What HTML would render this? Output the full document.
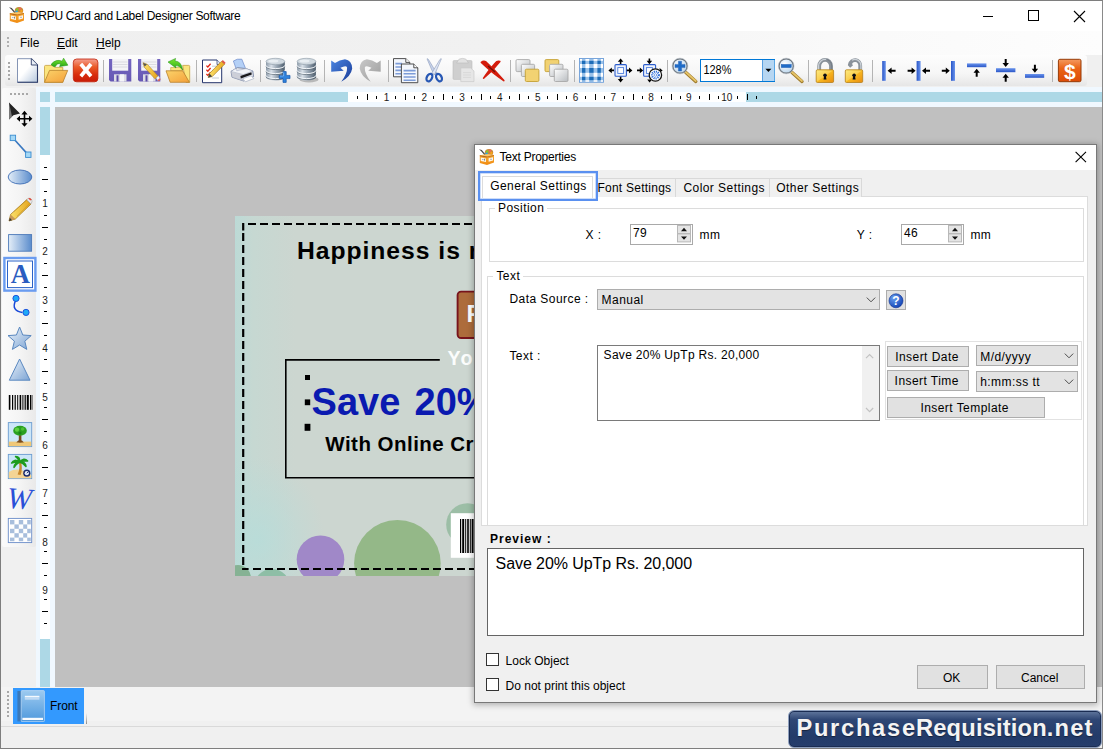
<!DOCTYPE html>
<html><head><meta charset="utf-8">
<style>
*{box-sizing:border-box;margin:0;padding:0}
html,body{width:1103px;height:749px;overflow:hidden;background:#f0f0f0}
body{font-family:"Liberation Sans",sans-serif;font-size:12px;color:#000;position:relative}
.a{position:absolute}
.t{position:absolute;white-space:nowrap;line-height:1}
#win{position:absolute;left:0;top:0;width:1103px;height:749px;background:#f0f0f0;overflow:hidden}
#title{left:1px;top:1px;width:1101px;height:30px;background:#fff}
#menubar{left:1px;top:31px;width:1101px;height:24px;background:linear-gradient(90deg,#efefef,#f1f1f1 45%,#f6f6f6 62%,#fafafa 80%,#fdfdfd)}
#toolbar{left:5px;top:55px;width:1082px;height:31px;background:linear-gradient(#fdfdfd,#f6f6f6 60%,#e6e6e6);border-radius:3px}
#toolbox{left:1px;top:86px;width:35px;height:601px;background:#f0f0f0}
#rulerbg{left:36px;top:87px;width:1066px;height:600px;background:#f0f8ff}
#canvas{left:55px;top:107px;width:1047px;height:580px;background:#c0c0c0}
.rb{background:#add8e6}
#tabbar{left:1px;top:687px;width:1101px;height:34px;background:#f3f3f3}
#status{left:1px;top:726px;width:1101px;height:22px;background:#f0f0f0;border-top:1px solid #d9d9d9}
.sep{position:absolute;width:1px;background:#b5b5b5}
/* dialog */
#dlg{left:474px;top:144px;width:625px;height:560px;background:#f0f0f0;border:1px solid #8a8a8a;box-shadow:0 0 7px 1px rgba(0,0,0,.35)}
.d{font-size:12px;letter-spacing:.45px}
.btn{position:absolute;background:#e1e1e1;border:1px solid #adadad;text-align:center}
.grp{position:absolute;border:1px solid #dcdcdc;background:#fff}
.inp{position:absolute;background:#fff;border:1px solid #7a7a7a}
.wm{font-size:23.7px;font-weight:bold;color:#f4f4f4;text-shadow:0 1px 1px rgba(0,0,0,.45)}
.cmb{position:absolute;background:#e3e3e3;border:1px solid #adadad}
</style></head><body>
<div id="win">
<div class="a" id="title"></div>
<div class="a" id="menubar"></div>
<div class="a" id="toolbar"></div>
<div class="a" id="toolbox"></div>
<div class="a" id="rulerbg"></div>
<div class="a" id="canvas"></div>
<div class="a" id="tabbar"></div>
<div class="a" id="status"></div>
<!--TITLE-->
<svg class="a" style="left:8px;top:6px" width="17" height="18" viewBox="0 0 17 18">
<defs><linearGradient id="bx" x1="0" y1="0" x2="0" y2="1"><stop offset="0" stop-color="#f7b13c"/><stop offset="1" stop-color="#f08a10"/></linearGradient></defs>
<ellipse cx="11" cy="4.6" rx="4.2" ry="3.6" fill="#c98a3a"/>
<circle cx="9.2" cy="3.6" r="1.2" fill="#7fd12a"/><circle cx="12" cy="2.8" r="1.2" fill="#ee6a5a"/><circle cx="13.4" cy="5" r="1.2" fill="#f7a21a"/><circle cx="8.6" cy="5.8" r="1.3" fill="#2aa5e8"/>
<path d="M1 1.2 L3.8 2 L7.6 6.6 L6.6 7.2 L3.4 3.4 Z" fill="#4a4a4a"/>
<path d="M1.8 7.2 L10 6.2 L16 7 L16 14.4 L9 17 L1.8 15 Z" fill="url(#bx)"/>
<path d="M1.8 7.2 L9 8.6 L16 7 L10 6.2Z" fill="#f9c56a"/>
<path d="M1.8 7.2 L9 8.6 L9 9.6 L1.8 8.3Z" fill="#b5651d"/><path d="M9 8.6 L16 7 L16 8 L9 9.6Z" fill="#c9781f"/>
<path d="M2.8 9.6 L8 10.4 L8 14 L2.8 13 Z" fill="#fdf6ea"/><path d="M10.6 10.2 L15 9.2 L15 12.6 L10.6 13.8Z" fill="#fdf6ea"/>
<rect x="4" y="11" width="1.6" height="1" fill="#bbb"/><rect x="6.2" y="10.8" width=".9" height="1.8" fill="#666"/><rect x="12" y="10.8" width="2" height=".9" fill="#aaa"/>
</svg>
<div class="t" id="ttl" style="left:30px;top:10px;font-size:12px;letter-spacing:-.3px">DRPU Card and Label Designer Software</div>
<svg class="a" style="left:975px;top:1px" width="126" height="30" viewBox="0 0 126 30" fill="none" stroke="#000" stroke-width="1" shape-rendering="crispEdges">
<path d="M8 15.5 H18"/><rect x="53.5" y="9.5" width="10" height="10"/>
<path d="M99 10 L110 21 M110 10 L99 21" shape-rendering="auto" stroke-width="1.1"/>
</svg>

<!--/TITLE-->
<!--MENU-->
<svg class="a" style="left:7px;top:36px" width="3" height="14" viewBox="0 0 3 14"><g fill="#b0b0b0"><rect x="0" y="1" width="2" height="2"/><rect x="0" y="5" width="2" height="2"/><rect x="0" y="9" width="2" height="2"/></g></svg>
<div class="t" style="left:20px;top:37px;font-size:12px">File</div>
<div class="t" style="left:57px;top:37px;font-size:12px"><u>E</u>dit</div>
<div class="t" style="left:96px;top:37px;font-size:12px"><u>H</u>elp</div>

<!--/MENU-->
<!--TOOLBAR-->
<svg class="a" style="left:0;top:55px" width="1103" height="32" viewBox="0 55 1103 32">
<defs>
<linearGradient id="gPage" x1="0" y1="0" x2="1" y2="1"><stop offset=".45" stop-color="#fff"/><stop offset="1" stop-color="#b4c6dc"/></linearGradient>
<linearGradient id="gFold" x1="0" y1="0" x2="1" y2="1"><stop offset="0" stop-color="#fbd36a"/><stop offset="1" stop-color="#f4a03a"/></linearGradient>
<linearGradient id="gRed" x1="0" y1="0" x2="0" y2="1"><stop offset="0" stop-color="#f4a090"/><stop offset=".35" stop-color="#ea5a28"/><stop offset=".7" stop-color="#d82c0c"/><stop offset="1" stop-color="#c81c08"/></linearGradient>
<linearGradient id="gGreen" x1="0" y1="0" x2="0" y2="1"><stop offset="0" stop-color="#7ee830"/><stop offset="1" stop-color="#28a818"/></linearGradient>
<linearGradient id="gPurp" x1="0" y1="0" x2="0" y2="1"><stop offset="0" stop-color="#7466c0"/><stop offset="1" stop-color="#6658b4"/></linearGradient>
<linearGradient id="gCyl" x1="0" y1="0" x2="1" y2="0"><stop offset="0" stop-color="#8c9aa8"/><stop offset=".28" stop-color="#d8e0e8"/><stop offset=".6" stop-color="#94a2b0"/><stop offset="1" stop-color="#4e5e6e"/></linearGradient>
<linearGradient id="gBlue" x1="0" y1="0" x2="1" y2="1"><stop offset="0" stop-color="#4a84e0"/><stop offset="1" stop-color="#1a3c98"/></linearGradient>
<linearGradient id="gGrey" x1="0" y1="0" x2="1" y2="1"><stop offset="0" stop-color="#c8c8c8"/><stop offset="1" stop-color="#9c9c9c"/></linearGradient>
<linearGradient id="gSq" x1="0" y1="0" x2="1" y2="1"><stop offset="0" stop-color="#fff"/><stop offset="1" stop-color="#b8bcc0"/></linearGradient>
<linearGradient id="gGold" x1="0" y1="0" x2="1" y2="1"><stop offset="0" stop-color="#fde870"/><stop offset=".5" stop-color="#f8b820"/><stop offset="1" stop-color="#e88c10"/></linearGradient>
<linearGradient id="gBar" x1="0" y1="0" x2="1" y2="0"><stop offset="0" stop-color="#2a56c8"/><stop offset="1" stop-color="#6a94ec"/></linearGradient>
<linearGradient id="gBarV" x1="0" y1="0" x2="0" y2="1"><stop offset="0" stop-color="#6a94ec"/><stop offset="1" stop-color="#2a56c8"/></linearGradient>
<linearGradient id="gOr" x1="0" y1="0" x2="0" y2="1"><stop offset="0" stop-color="#f49a60"/><stop offset=".4" stop-color="#ea6418"/><stop offset="1" stop-color="#dc4c08"/></linearGradient>
<radialGradient id="gLens" cx=".4" cy=".35" r=".7"><stop offset="0" stop-color="#fff"/><stop offset="1" stop-color="#b8d4ec"/></radialGradient>
<linearGradient id="gPen" x1="0" y1="0" x2="1" y2="0"><stop offset="0" stop-color="#fce470"/><stop offset="1" stop-color="#e8a820"/></linearGradient>
<g id="arL"><path d="M0 0 L4 -3.2 V-1 H8 V1 H4 V3.2Z" fill="#000"/></g>
<g id="floppy"><path d="M0 0 H22.3 V22.5 H1.6 L0 21Z" fill="url(#gPurp)"/><rect x="3.2" y="0" width="16" height="11.7" fill="#f4f4f6"/><path d="M4 3 H18.5 M4 5.5 H18.5 M4 8 H18.5" stroke="#d4d4dc" stroke-width=".8"/><rect x="5" y="15.3" width="12.5" height="7.2" fill="#dcdce4"/><rect x="7.5" y="16.3" width="2" height="6.2" fill="#5a4aa8"/><rect x="11" y="15.3" width="4" height="7.2" fill="#f4f4f8"/></g>
<g id="cyl"><path d="M0 3.2 V19 A9.4 3.2 0 0 0 18.8 19 V3.2Z" fill="url(#gCyl)"/><path d="M0 8 A9.4 3.2 0 0 0 18.8 8 M0 13 A9.4 3.2 0 0 0 18.8 13 M0 18 A9.4 3.2 0 0 0 18.8 18" fill="none" stroke="#56646f" stroke-width=".9" opacity=".75"/><path d="M0 7.1 A9.4 3.2 0 0 0 18.8 7.1 M0 12.1 A9.4 3.2 0 0 0 18.8 12.1 M0 17.1 A9.4 3.2 0 0 0 18.8 17.1" fill="none" stroke="#f2f6fa" stroke-width="1"/><ellipse cx="9.4" cy="3.2" rx="9.4" ry="3.2" fill="#d0d9e0" stroke="#8d9aa6" stroke-width=".6"/><ellipse cx="7.4" cy="2.8" rx="5" ry="1.5" fill="#eef2f6" opacity=".8"/></g>
<g id="lens"><path d="M5.6 6.4 L15.8 15.6" stroke="#a07c2c" stroke-width="3.4" stroke-linecap="round"/><path d="M5.6 6.2 L15.8 15.2" stroke="#e6c468" stroke-width="1.7" stroke-linecap="round"/><circle cx="0" cy="0.2" r="7.2" fill="url(#gLens)" stroke="#6c747c" stroke-width="1.3"/><circle cx="0" cy="0.2" r="7.9" fill="none" stroke="#b4bcc4" stroke-width=".5"/></g>
<g id="lockb"><rect x="0" y="0" width="17.4" height="12.7" rx="1.2" fill="url(#gGold)" stroke="#b4801c" stroke-width=".8"/><path d="M.6 .6 H16.8 L.6 12Z" fill="#fff3a0" opacity=".35"/><circle cx="8.8" cy="5.4" r="1.8" fill="#0c0c14"/><path d="M8 6.2 L7.3 9.6 H10.3 L9.6 6.2Z" fill="#0c0c14"/></g>
</defs>
<!-- grip -->
<g fill="#a8a8a8"><rect x="8" y="62" width="2" height="2"/><rect x="8" y="66" width="2" height="2"/><rect x="8" y="70" width="2" height="2"/><rect x="8" y="74" width="2" height="2"/><rect x="8" y="78" width="2" height="2"/></g>
<!-- separators -->
<g stroke="#b4b4b4" stroke-width="1"><path d="M103.5 60V82M196.5 60V82M260.5 60V82M324.5 60V82M388.5 60V82M510.5 60V82M574.5 60V82M667.5 60V82M808.5 60V82M872.5 60V82M1052.5 60V82"/></g>
<!-- new -->
<path d="M17.5 58.7 H31.3 L37.5 65 V82.3 H17.5Z" fill="url(#gPage)" stroke="#8494b4" stroke-width="1"/>
<path d="M31.3 58.7 L37.5 65 V82.3 H17.5" fill="none" stroke="#2c3c68" stroke-width="1.1"/><path d="M31.3 58.7 V65 H37.5" fill="#e8eef6" stroke="#2c3c68" stroke-width=".9"/>
<!-- open -->
<path d="M44.5 66.5 Q44.5 65.4 45.6 65.4 H53 L54.5 67.4 H62.8 V82.3 H44.5Z" fill="#fbe57e" stroke="#c8a040" stroke-width=".8"/>
<path d="M49.5 70.4 H67.7 L62.8 82.3 H44.5Z" fill="url(#gFold)" stroke="#b8802c" stroke-width=".8"/>
<path d="M51 64.5 Q56 58.5 62 61.2 L63.6 58.2 L67.9 65.2 L59.6 66.6 L60.6 63.8 Q56.6 63 55.4 66.6 Q52.8 67 51 64.5Z" fill="url(#gGreen)" stroke="#1c8c14" stroke-width=".5"/>
<!-- close -->
<rect x="73.3" y="59" width="24.6" height="22.8" rx="3.4" fill="url(#gRed)" stroke="#c02008" stroke-width=".8"/>
<path d="M80.8 64 L91 76.2 M91 64 L80.8 76.2" stroke="#fff" stroke-width="3.7"/>
<!-- save -->
<use href="#floppy" x="109" y="59"/>
<!-- save as -->
<use href="#floppy" x="138" y="59"/>
<g transform="translate(143 62.7) rotate(-42.5)"><path d="M0 0 L4 -2.1 H20 V2.1 H4Z" fill="url(#gPen)" stroke="#a87818" stroke-width=".5" transform="rotate(90)"/></g>
<path d="M143 62.7 L144.6 66.6 L147 64.4Z" fill="#555"/><path d="M156 78 L158.4 75.8 L160.2 78.6 L158 80.8Z" fill="#f4f4f4" stroke="#aaa" stroke-width=".4"/><path d="M157.6 80.2 L159.8 78 L160.6 79.4 L159 81.2Z" fill="#e86050"/>
<!-- folder back -->
<path d="M182.7 65.4 H188.7 Q189.7 65.4 189.7 66.4 V82.3 H186Z" fill="#fbe57e" stroke="#c8a040" stroke-width=".8"/>
<path d="M170.7 67.5 H182 L182.7 70.8 H170.7Z" fill="#fbe57e" stroke="#c8a040" stroke-width=".6"/>
<path d="M166 70.8 H182.7 L189.4 82.3 H170.2Z" fill="url(#gFold)" stroke="#b8802c" stroke-width=".8"/>
<path d="M168 62 L175.6 58.4 L175 61 Q181.6 61.4 182.6 70 Q180 65.6 175.6 65.4 L176 68Z" fill="url(#gGreen)" stroke="#1c8c14" stroke-width=".5"/>
<!-- edit -->
<path d="M202.5 60 H217 L221.7 64.6 V82.7 H202.5Z" fill="#fff" stroke="#24346c" stroke-width="1"/><path d="M217 60 V64.6 H221.7" fill="#dfe6f2" stroke="#24346c" stroke-width=".7"/>
<path d="M206.4 65.6 L207.8 67 L210.6 63.8 M206.4 69.8 L207.8 71.2 L210.6 68 M206.4 74 L207.8 75.4 L210.6 72.2" fill="none" stroke="#e02818" stroke-width="1.3"/>
<path d="M212 66.2 H218 M212 70.4 H218 M212 78 H219" stroke="#b8c0cc" stroke-width=".8"/>
<path d="M208.2 77.6 L209.4 73.6 L221.4 61.4 L224.6 64.2 L212.2 76.6Z" fill="url(#gPen)" stroke="#9c7010" stroke-width=".6"/><path d="M208.2 77.6 L209.4 73.6 L212.2 76.6Z" fill="#444"/><path d="M221.4 61.4 L222.8 60 L225.6 62.8 L224.6 64.2Z" fill="#e05848"/>
<!-- printer -->
<path d="M233.4 61 Q237 58.4 241.8 59.2 L245.6 68.6 L236.8 70.8Z" fill="#b4d0f6" stroke="#6c88c8" stroke-width=".7"/>
<path d="M231 71.4 L237.4 67.6 L246 68.6 L252.8 71 L253.6 76.6 L243.6 81 L232 77.2Z" fill="#dfe2e8" stroke="#6c7a9c" stroke-width=".8"/>
<path d="M231 71.4 L243.2 74.6 L252.8 71 L246 68.6 L236.8 70.8 L235.6 68.6Z" fill="#f2f4f8" stroke="#8a96b0" stroke-width=".4"/>
<path d="M232 77.2 L243.6 81 V75 L231.2 71.8Z" fill="#c4c8d2" opacity=".7"/>
<path d="M240.4 76 L251.4 72.2 L251.8 74.6 L240.8 78.6Z" fill="#1a1a1e"/>
<path d="M242.6 78.8 L251 75.8 L253.8 78.6 L245.4 81.8Z" fill="#fff" stroke="#8a96b0" stroke-width=".5"/>
<!-- db+ -->
<use href="#cyl" x="266" y="58.3"/>
<path d="M283 71.6 H286.2 V75.4 H290 V78.6 H286.2 V82.4 H283 V78.6 H279.2 V75.4 H283Z" fill="#2f82dc" stroke="#1656ac" stroke-width=".7"/><path d="M283.6 72.4 V76 H280" fill="none" stroke="#8cc0f4" stroke-width=".7"/>
<!-- db -->
<ellipse cx="309" cy="79.4" rx="9.6" ry="3" fill="#000" opacity=".22"/>
<use href="#cyl" x="297.1" y="58.3"/>
<!-- undo -->
<path d="M331.2 60.4 L335 63.1 Q339.6 60 345 59.3 Q351.8 60.2 352.2 68.5 Q351 76.5 341.2 81.7 Q347.4 73.4 347.1 67.4 Q346.2 64.8 340.4 67.7 L343.7 70.7 L331.2 71.8Z" fill="url(#gBlue)"/>
<!-- redo -->
<path d="M 380.7 60.4 L 376.9 63.1 Q 372.3 60.0 366.9 59.3 Q 360.1 60.2 359.7 68.5 Q 360.9 76.5 370.7 81.7 Q 364.5 73.4 364.8 67.4 Q 365.7 64.8 371.5 67.7 L 368.2 70.7 L 380.7 71.8 Z" fill="url(#gGrey)"/>
<!-- copy -->
<g stroke="#3c3c3c" stroke-width=".9"><path d="M393.5 58.6 H405.8 L409.8 62.4 V76.8 H393.5Z" fill="#f4f7fc"/><path d="M405.8 58.6 V62.4 H409.8" fill="#fff"/></g>
<path d="M395.4 63.6 H402 M395.4 67 H402 M395.4 70.4 H401 M395.4 73.8 H401" stroke="#7c9cd8" stroke-width="1.6"/>
<g stroke="#3c3c3c" stroke-width=".9"><path d="M401.4 64 H413.8 L417.8 67.8 V82.7 H401.4Z" fill="#f4f7fc"/><path d="M413.8 64 V67.8 H417.8" fill="#fff"/></g>
<path d="M403.6 70.6 H415.6 M403.6 73.8 H415.6 M403.6 77 H415.6 M403.6 80.2 H415.6" stroke="#7c9cd8" stroke-width="1.6"/>
<!-- cut -->
<path d="M427 58.8 Q427.6 58.4 428.4 59.4 L436.6 73 L433.8 74.6Z" fill="#c8d4ec" stroke="#8a98b8" stroke-width=".6"/>
<path d="M441.4 58.8 Q440.8 58.4 440 59.4 L431.8 73 L434.6 74.6Z" fill="#dfe6f4" stroke="#8a98b8" stroke-width=".6"/>
<ellipse cx="429.4" cy="77.6" rx="2.6" ry="4" transform="rotate(28 429.4 77.6)" fill="none" stroke="#2858b4" stroke-width="2.2"/>
<ellipse cx="439" cy="77.6" rx="2.6" ry="4" transform="rotate(-28 439 77.6)" fill="none" stroke="#2858b4" stroke-width="2.2"/>
<!-- paste -->
<rect x="453" y="60.6" width="19" height="18.8" rx="1" fill="#cfcfcf" stroke="#bdbdbd" stroke-width=".6"/><path d="M458 60.8 Q458 58.6 462.5 58.4 Q467 58.6 467 60.8 L468.4 63 H456.6Z" fill="#e2e2e2" stroke="#bcbcbc" stroke-width=".6"/>
<path d="M460.8 68 H470.6 L474 71 V81.6 H460.8Z" fill="#e6e6e6" stroke="#cacaca" stroke-width=".7"/><path d="M463 72.6 H471 M463 75 H471 M463 77.4 H471" stroke="#d4d4d4" stroke-width=".8"/>
<!-- delete -->
<path d="M481.4 62.4 Q483.6 60.4 486 62 Q495 70 503.8 80.6 Q493 73.4 481.4 62.4Z" fill="#d41c0c" stroke="#d41c0c" stroke-width="1.6" stroke-linejoin="round"/>
<path d="M499.8 61.4 Q497 60.6 495.4 63 Q488 71.4 483.6 78.2 Q492.6 70.8 499.8 61.4Z" fill="#d41c0c" stroke="#d41c0c" stroke-width="1.6" stroke-linejoin="round"/>
<path d="M488 66 L495 72" stroke="#701008" stroke-width="1.4"/>
<!-- layers front -->
<g stroke="#a8a8a8" stroke-width=".9"><rect x="516" y="59.6" width="14" height="12" rx="1.2" fill="url(#gSq)"/><rect x="521.4" y="64.3" width="13.2" height="12.2" rx="1.2" fill="url(#gSq)"/></g><rect x="525.3" y="69.2" width="13.6" height="12.3" rx="1.2" fill="#f2d272" stroke="#c4a034" stroke-width=".9"/>
<!-- layers back -->
<rect x="545" y="59.6" width="13.8" height="12" rx="1.2" fill="#f2d272" stroke="#c4a034" stroke-width=".9"/><g stroke="#a8a8a8" stroke-width=".9"><rect x="549.6" y="64.3" width="13.4" height="12.2" rx="1.2" fill="url(#gSq)"/><rect x="554.3" y="69.2" width="13.7" height="12.3" rx="1.2" fill="url(#gSq)"/></g>
<!-- grid -->
<rect x="579.5" y="58.5" width="24" height="23.8" fill="#fff" stroke="#6a9cd8" stroke-width=".9"/>
<g fill="#5a9adc" opacity=".6"><rect x="582" y="59" width="3.4" height="23"/><rect x="589.2" y="59" width="4.4" height="23"/><rect x="597.4" y="59" width="3.4" height="23"/><rect x="580" y="60.8" width="23.2" height="3.2"/><rect x="580" y="68" width="23.2" height="4.8"/><rect x="580" y="76.8" width="23.2" height="3.4"/></g>
<g fill="#1c6cb8"><rect x="582" y="60.8" width="3.4" height="3.2"/><rect x="589.2" y="60.8" width="4.4" height="3.2"/><rect x="597.4" y="60.8" width="3.4" height="3.2"/><rect x="582" y="68" width="3.4" height="4.8"/><rect x="589.2" y="68" width="4.4" height="4.8"/><rect x="597.4" y="68" width="3.4" height="4.8"/><rect x="582" y="76.8" width="3.4" height="3.4"/><rect x="589.2" y="76.8" width="4.4" height="3.4"/><rect x="597.4" y="76.8" width="3.4" height="3.4"/></g>
<!-- center -->
<rect x="615" y="64.6" width="11.4" height="11.6" rx="1" fill="#eef3fc" stroke="#2c5ccc" stroke-width="1.1"/><rect x="617.8" y="67.6" width="5.8" height="5.8" fill="#fff" stroke="#4c7cdc" stroke-width=".9"/>
<g fill="#000"><path d="M620.6 58.4 L623.4 61.8 H621.4 V64 H619.8 V61.8 H617.8Z"/><path d="M620.6 82.4 L623.4 79 H621.4 V76.8 H619.8 V79 H617.8Z"/><path d="M608.4 70.4 L611.8 67.6 V69.6 H614 V71.2 H611.8 V73.2Z"/><path d="M632.4 70.4 L629 67.6 V69.6 H626.8 V71.2 H629 V73.2Z"/></g>
<!-- center gear -->
<rect x="643.6" y="64.6" width="12" height="11.6" rx="1" fill="#eef3fc" stroke="#2c5ccc" stroke-width="1.1"/><rect x="646.4" y="67.6" width="6" height="5.8" fill="#fff" stroke="#4c7cdc" stroke-width=".9"/>
<g fill="#000"><path d="M649.4 64.2 L652.2 60.8 H650.2 V58.4 H648.6 V60.8 H646.6Z"/><path d="M643.2 70.4 L639.8 67.6 V69.6 H637 V71.2 H639.8 V73.2Z"/><path d="M662.6 70.4 L659.6 68 V72.8Z"/><path d="M649.6 82.4 L652 79.6 H647.2Z"/></g>
<circle cx="655.4" cy="75" r="6.2" fill="#fff" stroke="#111" stroke-width="1.3"/>
<circle cx="655.4" cy="75" r="3.4" fill="none" stroke="#2c6cd8" stroke-width="2.2" stroke-dasharray="1.1 .9"/><circle cx="655.4" cy="75" r="1.3" fill="#fff" stroke="#2c6cd8" stroke-width=".6"/>
<!-- zoom in -->
<use href="#lens" x="680" y="65.8"/>
<path d="M678.4 61.2 H681.6 V64.4 H685 V67.6 H681.6 V71 H678.4 V67.6 H675 V64.4 H678.4Z" fill="#1e6cc8" stroke="#1a58b0" stroke-width=".4"/>
<!-- combo -->
<rect x="700.5" y="59.5" width="74" height="22" fill="#fff" stroke="#0078d7" stroke-width="1"/>
<rect x="762.5" y="60" width="12" height="21" fill="#b6d6f2"/><path d="M762.5 60 V81" stroke="#5aa0e0" stroke-width="1"/>
<path d="M765.4 68.8 H771.4 L768.4 72Z" fill="#000"/>
<text x="703.4" y="73.9" font-family="Liberation Sans, sans-serif" font-size="12.4" fill="#000" textLength="28" lengthAdjust="spacingAndGlyphs">128%</text>
<!-- zoom out -->
<use href="#lens" x="786.2" y="65.8"/>
<rect x="781.2" y="64.4" width="10" height="3.2" fill="#1e6cc8" stroke="#1a58b0" stroke-width=".4"/>
<!-- lock -->
<path d="M819.2 70.4 V66 A5.9 6.2 0 0 1 831 66 V70.4" fill="none" stroke="#8a929a" stroke-width="3.8"/><path d="M818.6 70.4 V66 A6.5 6.8 0 0 1 826 59.4" fill="none" stroke="#ccd2d8" stroke-width="1.3"/><path d="M831.8 70.4 V66 A6.6 6.9 0 0 0 827 59.6" fill="none" stroke="#747c86" stroke-width="1"/>
<use href="#lockb" x="816.2" y="69.8"/>
<!-- unlock -->
<path d="M860.2 70.4 V65.8 A5.2 5.6 0 0 0 849.9 64.6 L851.6 66.6" fill="none" stroke="#8a929a" stroke-width="3.8"/><path d="M860.9 70.4 V65.8 A6 6.3 0 0 0 852 60.2" fill="none" stroke="#ccd2d8" stroke-width="1.2"/>
<use href="#lockb" x="845.3" y="69.8"/>
<!-- align -->
<rect x="882.2" y="61" width="3.6" height="19.8" fill="url(#gBar)"/><use href="#arL" x="887.6" y="70.8"/>
<use href="#arL" transform="translate(915.6 70.8) scale(-1 1)"/><rect x="916.6" y="61" width="4" height="19.8" fill="url(#gBar)"/><use href="#arL" x="922" y="70.8"/>
<use href="#arL" transform="translate(949.8 70.8) scale(-1 1)"/><rect x="951" y="61" width="4" height="19.8" fill="url(#gBar)"/>
<rect x="967" y="63.4" width="19.4" height="3.8" fill="url(#gBarV)"/><use href="#arL" transform="translate(976.7 68.8) rotate(90)"/>
<use href="#arL" transform="translate(1005.7 66.9) rotate(-90)"/><rect x="996" y="68.2" width="19.4" height="4" fill="url(#gBarV)"/><use href="#arL" transform="translate(1005.7 73.8) rotate(90)"/>
<use href="#arL" transform="translate(1034.9 72.8) rotate(-90)"/><rect x="1025" y="74" width="19.2" height="3.8" fill="url(#gBarV)"/>
<!-- dollar -->
<rect x="1058.4" y="59.3" width="22.6" height="22.4" rx="1.5" fill="url(#gOr)" stroke="#963c08" stroke-width="1"/>
<text x="1069.8" y="78.6" text-anchor="middle" font-family="Liberation Sans, sans-serif" font-weight="bold" font-size="21" fill="#fff">$</text>
</svg>

<!--/TOOLBAR-->
<!--RULERS-->
<div class="a rb" style="left:40px;top:92px;width:10px;height:10px"></div>
<div class="a rb" style="left:55px;top:92px;width:293px;height:10px"></div>
<div class="a" style="left:348px;top:92px;width:398px;height:10px;background:#fff"></div>
<div class="a rb" style="left:746px;top:92px;width:356px;height:10px"></div>
<div class="a rb" style="left:40px;top:107px;width:10px;height:48px"></div>
<div class="a" style="left:40px;top:155px;width:10px;height:484px;background:#fff"></div>
<div class="a rb" style="left:40px;top:639px;width:10px;height:48px"></div>
<svg class="a" style="left:0;top:86px" width="1103" height="602" viewBox="0 86 1103 602" font-family="Liberation Sans, sans-serif" font-size="10" fill="#1a1a1a">
<text x="386.5" y="100.8" text-anchor="middle">1</text>
<text x="424.3" y="100.8" text-anchor="middle">2</text>
<text x="462.1" y="100.8" text-anchor="middle">3</text>
<text x="499.9" y="100.8" text-anchor="middle">4</text>
<text x="537.7" y="100.8" text-anchor="middle">5</text>
<text x="575.5" y="100.8" text-anchor="middle">6</text>
<text x="613.3" y="100.8" text-anchor="middle">7</text>
<text x="651.1" y="100.8" text-anchor="middle">8</text>
<text x="688.9" y="100.8" text-anchor="middle">9</text>
<text x="726.7" y="100.8" text-anchor="middle">10</text>
<path d="M357.5 95.5V98.5M367.5 94V100M376.5 95.5V98.5M395.5 95.5V98.5M405.5 94V100M414.5 95.5V98.5M433.5 95.5V98.5M443.5 94V100M452.5 95.5V98.5M471.5 95.5V98.5M481.5 94V100M490.5 95.5V98.5M509.5 95.5V98.5M519.5 94V100M528.5 95.5V98.5M547.5 95.5V98.5M557.5 94V100M566.5 95.5V98.5M585.5 95.5V98.5M595.5 94V100M604.5 95.5V98.5M623.5 95.5V98.5M633.5 94V100M642.5 95.5V98.5M661.5 95.5V98.5M671.5 94V100M680.5 95.5V98.5M699.5 95.5V98.5M709.5 94V100M718.5 95.5V98.5M737.5 95.5V98.5M747.5 94V100M756.5 95.5V98.5" stroke="#000" stroke-width="1" shape-rendering="crispEdges"/>
<text x="45.1" y="206.9" text-anchor="middle">1</text>
<text x="45.1" y="255.3" text-anchor="middle">2</text>
<text x="45.1" y="303.7" text-anchor="middle">3</text>
<text x="45.1" y="352.1" text-anchor="middle">4</text>
<text x="45.1" y="400.5" text-anchor="middle">5</text>
<text x="45.1" y="448.9" text-anchor="middle">6</text>
<text x="45.1" y="497.3" text-anchor="middle">7</text>
<text x="45.1" y="545.7" text-anchor="middle">8</text>
<text x="45.1" y="594.1" text-anchor="middle">9</text>
<path d="M43.5 167.5H46.5M42 179.5H48M43.5 191.5H46.5M43.5 215.5H46.5M42 227.5H48M43.5 239.5H46.5M43.5 263.5H46.5M42 275.5H48M43.5 287.5H46.5M43.5 311.5H46.5M42 323.5H48M43.5 335.5H46.5M43.5 359.5H46.5M42 371.5H48M43.5 383.5H46.5M43.5 407.5H46.5M42 419.5H48M43.5 431.5H46.5M43.5 455.5H46.5M42 467.5H48M43.5 479.5H46.5M43.5 503.5H46.5M42 515.5H48M43.5 527.5H46.5M43.5 551.5H46.5M42 563.5H48M43.5 575.5H46.5M43.5 599.5H46.5M42 611.5H48M43.5 623.5H46.5" stroke="#000" stroke-width="1" shape-rendering="crispEdges"/>
</svg>
<!--/RULERS-->
<!--TOOLBOX-->
<div class="a" style="left:2px;top:88px;width:34px;height:459px;background:linear-gradient(90deg,#fbfbfb,#f4f4f4 55%,#e9e9e9);border-radius:2px"></div>
<svg class="a" style="left:0;top:86px" width="40" height="470" viewBox="0 86 40 470">
<defs>
<linearGradient id="tE" x1="0" y1="0" x2="1" y2="0"><stop offset="0" stop-color="#e4eef8"/><stop offset="1" stop-color="#5a8ccc"/></linearGradient>
<linearGradient id="tS" x1="0" y1="0" x2="1" y2="1"><stop offset="0" stop-color="#eef4fa"/><stop offset="1" stop-color="#7ca4d4"/></linearGradient>
<linearGradient id="tP" x1="0" y1="0" x2="1" y2="0"><stop offset="0" stop-color="#fce470"/><stop offset="1" stop-color="#e4a41c"/></linearGradient>
</defs>
<g fill="#a8a8a8"><rect x="10" y="93" width="2" height="2"/><rect x="14" y="93" width="2" height="2"/><rect x="18" y="93" width="2" height="2"/><rect x="22" y="93" width="2" height="2"/><rect x="26" y="93" width="2" height="2"/></g>
<!-- select -->
<path d="M9 102.6 L9 119.4 L13.4 115.2 L20 113.6Z" fill="#222"/><path d="M9 102.6 L9 119.4 L12 116.6Z" fill="#777"/>
<g fill="#000"><path d="M24.5 110.8 L27.6 114.4 H25.3 V118 H29 V115.8 L32.4 118.8 L29 121.8 V119.6 H25.3 V123.2 H27.6 L24.5 126.8 L21.4 123.2 H23.7 V119.6 H20 V121.8 L16.6 118.8 L20 115.8 V118 H23.7 V114.4 H21.4Z"/></g>
<!-- line -->
<path d="M13 138 L28 154.6" stroke="#3a78c0" stroke-width="1.6"/>
<rect x="10.2" y="135.2" width="5.4" height="5.4" fill="#a4d8f6" stroke="#3a8cd0" stroke-width=".9"/><rect x="25.6" y="152" width="5.4" height="5.4" fill="#a4d8f6" stroke="#3a8cd0" stroke-width=".9"/>
<!-- ellipse -->
<ellipse cx="20" cy="177" rx="11.8" ry="7" fill="url(#tE)" stroke="#3c6cb4" stroke-width=".9"/>
<!-- pencil -->
<path d="M9 221 L10.6 214.4 L26.6 199.8 L31 204 L15.4 219Z" fill="url(#tP)" stroke="#9c7010" stroke-width=".7"/><path d="M9 221 L10.6 214.4 L15.4 219Z" fill="#c89858"/><path d="M9 221 L9.8 217.8 L12 220.2Z" fill="#333"/>
<path d="M26.6 199.8 L28.2 198.4 Q30.2 197.6 31.6 199.6 Q32.8 201.4 31 204Z" fill="#e8e8e8" stroke="#999" stroke-width=".5"/><path d="M28.2 198.4 Q30.2 197.2 31.8 199.6 L30.4 200.6Z" fill="#e04838"/>
<path d="M14 211.6 L27.2 199.6 M17 216 L29.6 203.4" stroke="#c48c18" stroke-width=".6" opacity=".6"/>
<!-- rect -->
<rect x="8.6" y="234.6" width="23" height="16.6" fill="url(#tE)" stroke="#4a78b8" stroke-width=".9"/>
<!-- A selected -->
<rect x="4.4" y="258" width="31" height="32.6" fill="#fff" stroke="#6a9cf0" stroke-width="2.4"/>
<rect x="7.5" y="261" width="25" height="26.6" fill="#fff" stroke="#2a62c8" stroke-width="1"/>
<text x="20.2" y="283.4" text-anchor="middle" font-family="Liberation Serif, serif" font-weight="bold" font-size="26.5" fill="#2a5cc0">A</text>
<!-- curve -->
<path d="M15.4 301 Q11 310.6 22.4 312.6" fill="none" stroke="#1848d8" stroke-width="1.5"/>
<circle cx="16" cy="298.4" r="3.1" fill="#1eaaf8" stroke="#1848d8" stroke-width=".9"/><circle cx="26" cy="312.4" r="3.1" fill="#1eaaf8" stroke="#1848d8" stroke-width=".9"/>
<!-- star -->
<path d="M19.6 327 L22.8 335 L31.2 335.6 L24.8 341.2 L26.8 349.4 L19.6 345 L12.4 349.4 L14.4 341.2 L8 335.6 L16.4 335Z" fill="url(#tS)" stroke="#5a88c0" stroke-width="1" stroke-linejoin="round"/>
<!-- triangle -->
<path d="M19.6 359 L30 380.2 H9.3Z" fill="url(#tS)" stroke="#5a88c0" stroke-width="1" stroke-linejoin="round"/>
<!-- barcode -->
<g fill="#000"><rect x="8.8" y="395" width="1.6" height="14.8"/><rect x="12" y="395" width="1.2" height="14.8"/><rect x="14.6" y="395" width="1.2" height="14.8"/><rect x="17.2" y="395" width="1" height="14.8"/><rect x="19.6" y="395" width="1.6" height="14.8"/><rect x="22.4" y="395" width="1" height="14.8"/><rect x="24.6" y="395" width="1.2" height="14.8"/><rect x="26.8" y="395" width="2" height="14.8"/><rect x="30" y="395" width="1" height="14.8"/><rect x="31.6" y="395" width=".8" height="14.8"/></g>
<!-- image -->
<rect x="8.3" y="422.6" width="23.4" height="24" fill="#cce6f8" stroke="#6a9cd0" stroke-width=".9"/>
<rect x="8.8" y="441.6" width="22.4" height="4.6" fill="#f0c878"/>
<rect x="18.8" y="434" width="2.6" height="8.4" fill="#7a4a1c"/><path d="M16.4 442.4 H23.8 L22 440.6 H18.2Z" fill="#7a4a1c"/>
<ellipse cx="20" cy="430.8" rx="6.8" ry="5" fill="#2aa020"/><circle cx="17" cy="429.6" r="2.2" fill="#5cd040"/><circle cx="22.6" cy="429" r="1.8" fill="#4cc034"/><circle cx="20" cy="433" r="1.6" fill="#188414"/>
<!-- image2 -->
<rect x="8.3" y="454.4" width="23.4" height="24.2" fill="#cce6f8" stroke="#6a9cd0" stroke-width=".9"/>
<path d="M8.8 472 Q16 467.6 24 471 L31.2 475 V478.2 H8.8Z" fill="#f4d494"/>
<path d="M17.6 474.6 Q20.6 468 18.6 461.4 L20.8 461.4 Q23 468 20.6 475Z" fill="#c8882c"/>
<path d="M19.6 462 Q14 458.4 11.6 463 Q15.6 461.6 19.6 462 Q24 457 27.6 461 Q23.6 460.4 19.6 462 Q20 456.4 15.6 456.6 Q18.6 458.4 19.6 462 Q25.6 461.4 26 466.4 Q23 462.8 19.6 462 Q14.4 463 14 467.4 Q16.4 463.6 19.6 462Z" fill="#1c9c1c" stroke="#1c9c1c" stroke-width="1.6" stroke-linejoin="round"/>
<circle cx="26.8" cy="473.2" r="3.6" fill="#1c2c6c"/><circle cx="26.8" cy="473.2" r="2.1" fill="#e4ecf8"/><path d="M26.8 473.2 L28.6 471.4" stroke="#1c2c6c" stroke-width=".9"/>
<!-- W -->
<text x="19.4" y="508.6" text-anchor="middle" font-family="Liberation Serif, serif" font-style="italic" font-size="30" fill="#2a50d8" transform="rotate(4 20 500)">W</text>
<!-- checker -->
<rect x="8.3" y="518.4" width="23.4" height="24.2" fill="#fff" stroke="#6a8cc8" stroke-width=".9"/>
<g fill="#a8bedc"><rect x="10" y="520" width="4.4" height="4.4"/><rect x="18.8" y="520" width="4.4" height="4.4"/><rect x="27.2" y="520" width="3.6" height="4.4"/><rect x="14.4" y="524.4" width="4.4" height="4.4"/><rect x="23.2" y="524.4" width="4" height="4.4"/><rect x="10" y="528.8" width="4.4" height="4.4"/><rect x="18.8" y="528.8" width="4.4" height="4.4"/><rect x="27.2" y="528.8" width="3.6" height="4.4"/><rect x="14.4" y="533.2" width="4.4" height="4.4"/><rect x="23.2" y="533.2" width="4" height="4.4"/><rect x="10" y="537.6" width="4.4" height="3.6"/><rect x="18.8" y="537.6" width="4.4" height="3.6"/><rect x="27.2" y="537.6" width="3.6" height="3.6"/></g>
</svg>

<!--/TOOLBOX-->
<!--CARD-->
<div class="a" id="card" style="left:235px;top:216px;width:420px;height:360px;background:#ccd6d0;overflow:hidden">
<div class="a" style="left:0;top:0;width:60px;height:360px;background:linear-gradient(90deg,#bcdad6,#c6d8d2 30%,rgba(204,214,208,0))"></div>
<div class="a" style="left:0;top:240px;width:90px;height:120px;background:radial-gradient(ellipse at 25% 70%,rgba(182,221,218,.8),rgba(204,214,208,0) 70%)"></div>
<svg class="a" style="left:0;top:0" width="420" height="360" viewBox="235 216 420 360">
<circle cx="467.5" cy="524.5" r="21.3" fill="#9cbea6"/>
<circle cx="238" cy="578" r="13" fill="#86b294"/>
<circle cx="272" cy="587" r="18" fill="#8ebea6"/>
<circle cx="320.5" cy="559.3" r="23.8" fill="#a088c8"/>
<circle cx="397.4" cy="563.3" r="43.3" fill="#94b888"/>
<rect x="450.8" y="513.2" width="60" height="44.6" fill="#fff"/>
<g fill="#000"><rect x="460" y="519" width="1.2" height="34"/><rect x="462.2" y="519" width="2" height="34"/><rect x="465.2" y="519" width="1" height="34"/><rect x="467.2" y="519" width="1.6" height="34"/><rect x="469.8" y="519" width="1" height="34"/><rect x="471.6" y="519" width="2" height="34"/><rect x="474.6" y="519" width="1" height="34"/></g>
<path d="M248 224 H700 M243.2 233 V567 M253 569 H700" fill="none" stroke="#000" stroke-width="2.2" stroke-dasharray="8 4"/><path d="M243.2 223 V230.4 M242.1 569 H248.6" fill="none" stroke="#000" stroke-width="2.2"/>
<path d="M439.8 359.9 H285.8 V477.7 H700" fill="none" stroke="#000" stroke-width="1.6"/>
<rect x="457.6" y="291.6" width="60" height="46.4" rx="3.5" fill="#ad6c3c" stroke="#78141c" stroke-width="1.9"/>
<g fill="#000"><rect x="305" y="375" width="5" height="5"/><rect x="304.8" y="399.4" width="5.4" height="5.8"/><rect x="304.6" y="423.8" width="5.8" height="7"/></g>
</svg>
<div class="t" style="left:61.9px;top:22.7px;font-weight:bold;font-size:24.7px;letter-spacing:.97px">Happiness is not</div>
<div class="t" id="cF" style="left:231.6px;top:86.4px;font-weight:bold;font-size:24.4px;color:#fff">F</div>
<div class="t" id="cY" style="left:212.6px;top:132.8px;font-weight:bold;font-size:19.6px;color:#fbfdfc;letter-spacing:1.3px">You</div>
<div class="t" style="left:76.6px;top:166.8px;font-weight:bold;font-size:38px;color:#0a1ab0;word-spacing:3.7px">Save 20% UpTo</div>
<div class="t" style="left:90.3px;top:217.6px;font-weight:bold;font-size:20.5px;letter-spacing:.47px">With Online Credit</div>
</div>

<!--/CARD-->
<!--TABBAR-->
<svg class="a" style="left:7px;top:690px" width="3" height="28" viewBox="0 0 3 28"><g fill="#a8a8a8"><rect y="1" width="2" height="2"/><rect y="5" width="2" height="2"/><rect y="9" width="2" height="2"/><rect y="13" width="2" height="2"/><rect y="17" width="2" height="2"/><rect y="21" width="2" height="2"/><rect y="25" width="2" height="2"/></g></svg>
<div class="a" style="left:13px;top:688px;width:71px;height:36px;background:#3399fe"></div>
<svg class="a" style="left:16px;top:690px" width="30" height="32" viewBox="0 0 30 32"><defs><linearGradient id="bk" x1="0" y1="0" x2="0" y2="1"><stop offset="0" stop-color="#9ccaf0"/><stop offset="1" stop-color="#4e98dc"/></linearGradient></defs>
<rect x="1.4" y="1" width="4.2" height="30.4" fill="#3a78b8"/><rect x="5.2" y=".6" width="23.2" height="31" rx=".8" fill="url(#bk)" stroke="#c4dcf4" stroke-width=".7"/>
<rect x="8.8" y="5.8" width="14.6" height="1.7" fill="#f4f9fe"/><rect x="8.8" y="7.5" width="14.6" height="2.2" fill="#c0daf4"/><rect x="6.4" y="27.8" width="20.6" height="2.2" fill="#f8fbfe"/></svg>
<div class="t" style="left:50px;top:699.6px;font-size:12px;letter-spacing:-.1px">Front</div>
<div class="a" style="left:86px;top:713px;width:1px;height:11px;background:linear-gradient(rgba(150,150,150,0),#8e8e8e)"></div>

<!--/TABBAR-->
<!--DIALOG-->
<div class="a" id="dlg" style="left:474px;top:144px;width:623px;height:559px;background:#f0f0f0;border:1px solid #787878;box-shadow:0 1px 6px 1px rgba(0,0,0,.27)"></div>
<div class="a" id="dl" style="left:0;top:0;width:0;height:0">
<div class="a" style="left:475px;top:145px;width:621px;height:25px;background:#fff"></div>
<svg class="a" style="left:478px;top:148px" width="17" height="18" viewBox="0 0 17 18">
<ellipse cx="11" cy="4.6" rx="4.2" ry="3.6" fill="#c98a3a"/>
<circle cx="9.2" cy="3.6" r="1.2" fill="#7fd12a"/><circle cx="12" cy="2.8" r="1.2" fill="#ee6a5a"/><circle cx="13.4" cy="5" r="1.2" fill="#f7a21a"/><circle cx="8.6" cy="5.8" r="1.3" fill="#2aa5e8"/>
<path d="M1 1.2 L3.8 2 L7.6 6.6 L6.6 7.2 L3.4 3.4 Z" fill="#4a4a4a"/>
<path d="M1.8 7.2 L10 6.2 L16 7 L16 14.4 L9 17 L1.8 15 Z" fill="url(#bx)"/>
<path d="M1.8 7.2 L9 8.6 L16 7 L10 6.2Z" fill="#f9c56a"/>
<path d="M1.8 7.2 L9 8.6 L9 9.6 L1.8 8.3Z" fill="#b5651d"/><path d="M9 8.6 L16 7 L16 8 L9 9.6Z" fill="#c9781f"/>
<path d="M2.8 9.6 L8 10.4 L8 14 L2.8 13 Z" fill="#fdf6ea"/><path d="M10.6 10.2 L15 9.2 L15 12.6 L10.6 13.8Z" fill="#fdf6ea"/>
<rect x="4" y="11" width="1.6" height="1" fill="#bbb"/><rect x="6.2" y="10.8" width=".9" height="1.8" fill="#666"/><rect x="12" y="10.8" width="2" height=".9" fill="#aaa"/>
</svg>
<div class="t" style="left:499.6px;top:151px;font-size:12px;letter-spacing:-.25px">Text Properties</div>
<svg class="a" style="left:1074px;top:150px" width="14" height="14" viewBox="0 0 14 14"><path d="M1.6 1.8 L12 12.2 M12 1.8 L1.6 12.2" stroke="#000" stroke-width="1.1"/></svg>
<!-- tab page -->
<div class="a" style="left:481px;top:196px;width:607px;height:330px;background:#fff;border:1px solid #dcdcdc"></div>
<!-- tabs -->
<div class="a" style="left:596px;top:178px;width:80px;height:19px;background:#f0f0f0;border:1px solid #d9d9d9;border-bottom:0"></div>
<div class="a" style="left:675px;top:178px;width:95px;height:19px;background:#f0f0f0;border:1px solid #d9d9d9;border-bottom:0"></div>
<div class="a" style="left:769px;top:178px;width:93px;height:19px;background:#f0f0f0;border:1px solid #d9d9d9;border-bottom:0"></div>
<div class="a" style="left:478px;top:171px;width:120px;height:29.5px;background:#fff;border:2px solid #5a90f0;box-shadow:0 0 0 .5px #9cbcf4 inset"></div>
<div class="a" style="left:482px;top:176px;width:111px;height:22px;background:#fff;border:1px solid #dcdcdc;border-bottom:0"></div>
<div class="t d" id="t1" style="left:490.2px;top:180px">General Settings</div>
<div class="t d" id="t2" style="left:597.4px;top:182px;letter-spacing:.25px">Font Settings</div>
<div class="t d" id="t3" style="left:683.4px;top:182px">Color Settings</div>
<div class="t d" id="t4" style="left:776.2px;top:182px">Other Settings</div>
<!-- position group -->
<div class="grp" style="left:489px;top:208px;width:595px;height:54px"></div>
<div class="t d" id="t5" style="left:495px;top:202px;background:#fff;padding:0 3px">Position</div>
<div class="t d" id="t6" style="left:585.6px;top:229.2px">X :</div>
<div class="inp" style="left:630px;top:224px;width:63px;height:21px;border-color:#a9a9a9"></div>
<div class="t d" style="left:633px;top:227.2px">79</div>
<div class="t d" id="t7" style="left:699.6px;top:229.2px">mm</div>
<div class="t d" id="t8" style="left:856.8px;top:229.2px">Y :</div>
<div class="inp" style="left:901px;top:224px;width:63px;height:21px;border-color:#a9a9a9"></div>
<div class="t d" style="left:904px;top:227.2px">46</div>
<div class="t d" id="t9" style="left:970.4px;top:229.2px">mm</div>
<svg class="a" style="left:677px;top:225px" width="14" height="18" viewBox="0 0 14 18"><rect x=".5" y=".5" width="13" height="8" fill="#e4e4e4" stroke="#b8b8b8"/><rect x=".5" y="8.9" width="13" height="8" fill="#e4e4e4" stroke="#b8b8b8"/><path d="M4 6.2 L7 2.8 L10 6.2Z M4 11.4 L7 14.8 L10 11.4Z" fill="#111"/></svg>
<svg class="a" style="left:948px;top:225px" width="14" height="18" viewBox="0 0 14 18"><rect x=".5" y=".5" width="13" height="8" fill="#e4e4e4" stroke="#b8b8b8"/><rect x=".5" y="8.9" width="13" height="8" fill="#e4e4e4" stroke="#b8b8b8"/><path d="M4 6.2 L7 2.8 L10 6.2Z M4 11.4 L7 14.8 L10 11.4Z" fill="#111"/></svg>
<!-- text group -->
<div class="grp" style="left:487px;top:276px;width:597px;height:249px;border-bottom:0"></div>
<div class="t d" id="t10" style="left:493.4px;top:270.4px;background:#fff;padding:0 3px">Text</div>
<div class="t d" id="t11" style="left:509.4px;top:293.4px">Data Source :</div>
<div class="cmb" style="left:597px;top:289px;width:283px;height:21px"></div>
<div class="t d" id="t12" style="left:601.6px;top:294px">Manual</div>
<svg class="a" style="left:865px;top:296px" width="12" height="8" viewBox="0 0 12 8"><path d="M1.8 1.6 L6 5.8 L10.2 1.6" fill="none" stroke="#4c4c4c" stroke-width="1"/></svg>
<div class="btn" style="left:886px;top:290px;width:20px;height:20px"></div>
<svg class="a" style="left:888px;top:293px" width="16" height="16" viewBox="0 0 16 16"><defs><radialGradient id="hq" cx=".35" cy=".3" r=".8"><stop offset="0" stop-color="#6aa0f0"/><stop offset="1" stop-color="#0c3cb0"/></radialGradient></defs><circle cx="8" cy="7.8" r="7" fill="url(#hq)" stroke="#0a2c8c" stroke-width=".6"/><text x="8" y="12" text-anchor="middle" font-family="Liberation Sans, sans-serif" font-weight="bold" font-size="12" fill="#fff">?</text></svg>
<div class="t d" id="t13" style="left:509.4px;top:349.8px">Text :</div>
<div class="inp" style="left:597px;top:345px;width:283px;height:76px;border-color:#7a7a7a"></div>
<div class="a" style="left:862px;top:346px;width:17px;height:74px;background:#f0f0f0"></div>
<svg class="a" style="left:862px;top:346px" width="17" height="74" viewBox="0 0 17 74"><path d="M4 12.2 L7.6 8.6 L11.2 12.2 M4 62 L7.6 65.6 L11.2 62" fill="none" stroke="#c2c2c2" stroke-width="1.2"/></svg>
<div class="t d" id="t14" style="left:603.6px;top:349.2px;letter-spacing:.3px">Save 20% UpTp Rs. 20,000</div>
<!-- insert panel -->
<div class="a" style="left:885px;top:341px;width:197px;height:78.5px;background:#fff;border:1px solid #e2e2e2"></div>
<div class="btn" style="left:887px;top:346px;width:82px;height:21px"></div>
<div class="t d" id="t15" style="left:895.2px;top:351.4px">Insert Date</div>
<div class="cmb" style="left:976px;top:345px;width:102px;height:21px"></div>
<div class="t d" id="t16" style="left:980.2px;top:350.6px">M/d/yyyy</div>
<svg class="a" style="left:1063px;top:352px" width="12" height="8" viewBox="0 0 12 8"><path d="M1.8 1.6 L6 5.8 L10.2 1.6" fill="none" stroke="#4c4c4c" stroke-width="1"/></svg>
<div class="btn" style="left:887px;top:370px;width:82px;height:21px"></div>
<div class="t d" id="t17" style="left:894.6px;top:375.4px">Insert Time</div>
<div class="cmb" style="left:976px;top:371px;width:102px;height:21px"></div>
<div class="t d" id="t18" style="left:980.2px;top:376px">h:mm:ss tt</div>
<svg class="a" style="left:1063px;top:378px" width="12" height="8" viewBox="0 0 12 8"><path d="M1.8 1.6 L6 5.8 L10.2 1.6" fill="none" stroke="#4c4c4c" stroke-width="1"/></svg>
<div class="btn" style="left:887px;top:397px;width:158px;height:21px"></div>
<div class="t d" id="t19" style="left:920.4px;top:402px">Insert Template</div>
<!-- preview -->
<div class="t d" id="t20" style="left:490px;top:533.4px;font-weight:bold;letter-spacing:1px">Preview :</div>
<div class="inp" style="left:487px;top:548px;width:597px;height:88px;border-color:#646464"></div>
<div class="t" id="t21" style="left:495.6px;top:555.8px;font-size:16px;letter-spacing:-.08px">Save 20% UpTp Rs. 20,000</div>
<!-- checkboxes -->
<div class="a" style="left:486px;top:653px;width:13px;height:13px;background:#fff;border:1px solid #333"></div>
<div class="t" id="t22" style="left:505.6px;top:655.4px;font-size:12px">Lock Object</div>
<div class="a" style="left:486px;top:678px;width:13px;height:13px;background:#fff;border:1px solid #333"></div>
<div class="t" id="t23" style="left:505.6px;top:680px;font-size:12px">Do not print this object</div>
<div class="btn" style="left:917px;top:665px;width:71px;height:24px"></div>
<div class="t" id="t24" style="left:943px;top:671.6px;font-size:12px">OK</div>
<div class="btn" style="left:996px;top:665px;width:89px;height:24px"></div>
<div class="t" id="t25" style="left:1021px;top:671.6px;font-size:12px">Cancel</div>
</div>

<!--/DIALOG-->
<!--WATERMARK-->
<div class="a" style="left:788px;top:709.5px;width:314px;height:38px;border-radius:6px;background:linear-gradient(#62789e,#2e4674 24%,#233b69 70%,#263e6c);border:1px solid #8e9fbd;box-shadow:0 0 0 1px #1a2c52 inset"></div>
<div class="t wm" id="wm1" style="left:796.4px;top:716.7px;letter-spacing:1.72px">Purchase</div>
<div class="t wm" id="wm2" style="left:916px;top:716.7px;letter-spacing:.17px">Requisition</div>
<div class="t wm" id="wm3" style="left:1046.8px;top:716.7px;letter-spacing:1.2px">.net</div>

<!--/WATERMARK-->
<div class="a" style="left:0;top:0;width:1103px;height:749px;border:1px solid #7e7e7e;border-right-color:#8a8a8a;pointer-events:none"></div>
</div>
</body></html>
